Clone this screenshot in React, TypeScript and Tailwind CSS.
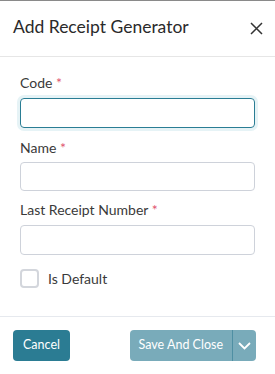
import React from "react";

export default function App() {
  return (
    <div className="w-[275px] h-[374px] bg-white border-t border-[#8a8a8a] flex flex-col text-[#3a3a3a] [font-family:Lato,'Open_Sans',sans-serif]">
      <div className="h-[56px] flex items-center justify-between pl-[13px] pr-[12px] pb-[2px] border-b border-[#e6e6e6]">
        <span className="text-[17.5px] text-[#2a2a2a]">Add Receipt Generator</span>
        <svg width="13" height="13" viewBox="0 0 13 13" className="mt-[1px]">
          <path d="M1 1 L12 12 M12 1 L1 12" stroke="#333" strokeWidth="1.5" />
        </svg>
      </div>
      <div className="flex-1 px-[20px] pt-[17px] flex flex-col border-b border-[#e6e9ee]">
        <label className="text-[14px] leading-[18px] mb-[6px]">
          Code <span className="text-[#e05570]">*</span>
        </label>
        <div className="h-[30px] rounded-[4px] border border-[#2a7d94] shadow-[0_0_0_3px_#e6f3f6]"></div>
        <label className="text-[14px] leading-[18px] mt-[11px] mb-[5px]">
          Name <span className="text-[#e05570]">*</span>
        </label>
        <div className="h-[29px] rounded-[4px] border border-[#ced2da]"></div>
        <label className="text-[14px] leading-[18px] mt-[10px] mb-[6px]">
          Last Receipt Number <span className="text-[#e05570]">*</span>
        </label>
        <div className="h-[30px] rounded-[4px] border border-[#ced2da]"></div>
        <div className="flex items-center mt-[13px]">
          <div className="w-[19px] h-[19px] rounded-[4px] border-2 border-[#d3d6dc]"></div>
          <span className="ml-[9px] text-[14px]">Is Default</span>
        </div>
      </div>
      <div className="h-[57px] flex items-center justify-between pl-[13px] pr-[19px]">
        <button className="h-[31px] px-[10px] rounded-[4px] bg-[#2b7c93] text-white text-[12.5px]">Cancel</button>
        <div className="h-[31px] flex rounded-[4px] bg-[#79abba] text-white text-[12.5px] overflow-hidden">
          <span className="px-[9px] flex items-center">Save And Close</span>
          <span className="w-[24px] border-l border-[#4f8fa3] flex items-center justify-center">
            <svg width="13" height="8" viewBox="0 0 13 8">
              <path d="M1 1 L6.5 6.5 L12 1" stroke="white" strokeWidth="1.8" fill="none" />
            </svg>
          </span>
        </div>
      </div>
    </div>
  );
}
